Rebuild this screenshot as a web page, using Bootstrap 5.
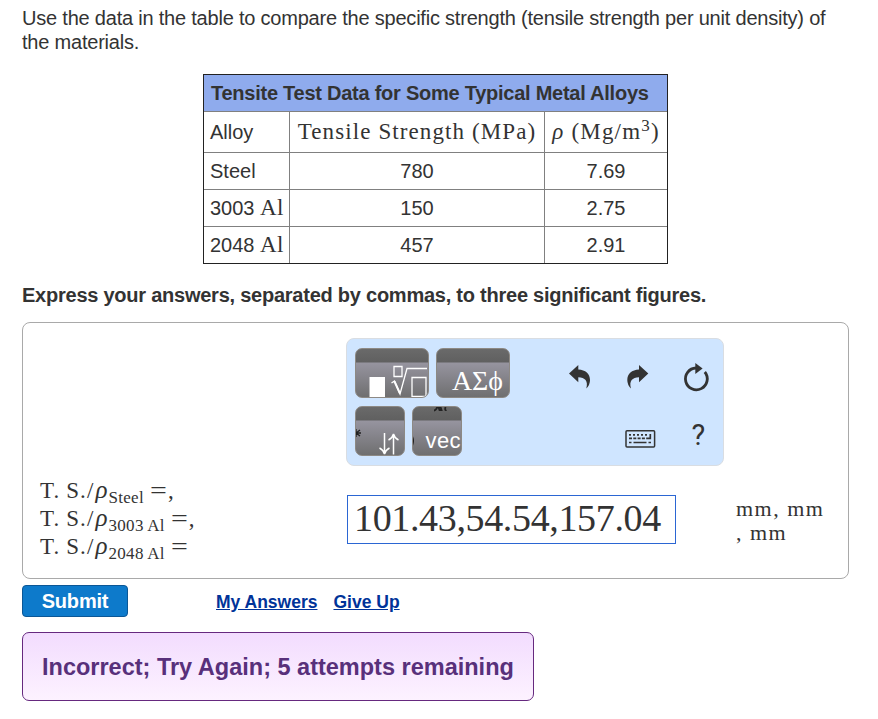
<!DOCTYPE html>
<html lang="en">
<head>
<meta charset="utf-8">
<meta name="viewport" content="width=device-width, initial-scale=1">
<title>Specific strength</title>
<link href="https://cdn.jsdelivr.net/npm/bootstrap@5.3.0/dist/css/bootstrap.min.css" rel="stylesheet">
<style>
body{font:20px/24px "Liberation Sans",Arial,sans-serif;color:#333;background:#fff;height:719px;overflow:hidden}
.page{padding:6px 29px 0 22px}
.intro{height:48px;white-space:nowrap;letter-spacing:-.21px}
.math{font-family:"Liberation Serif","Times New Roman",serif;font-size:23px;letter-spacing:1.1px}
.data-table{width:465px;margin:20px 0 0 181px;table-layout:fixed;border:1px solid #222;border-collapse:collapse;white-space:nowrap}
.data-table th,.data-table td{border:1px solid #808080;padding:0 6px;height:37px;line-height:24px;vertical-align:middle}
.data-table thead th{background:#8fabed;padding-left:7px;letter-spacing:-.25px}
.data-table .heads td{height:41px}
.data-table{outline:1px solid #222;outline-offset:-1px}
.data-table .alloy{letter-spacing:.4px}
.data-table .density{letter-spacing:1.2px;margin:0 -4px}
.density sup{font-size:17px;top:-.5em;line-height:0;letter-spacing:1.2px}
.instr{margin-top:19px;height:24px;letter-spacing:-.24px}
.answer{height:257px;margin-top:15px;border:1px solid #a9a9a9;border-radius:8px;padding:15px 0 0 16px}
.labels{width:307px;padding:139px 0 0 1px;line-height:28px;white-space:nowrap}
.labels div{word-spacing:-1px}
.labels i{margin-left:1px;font-size:25px;line-height:20px}
.labels sub{font-size:17px;letter-spacing:.3px;bottom:-.32em}
.labels .eq{display:inline-block;transform:scaleX(1.3);transform-origin:left;margin-right:4px;line-height:20px}
.entry{width:378px}
.tools{height:128px;background:#cfe5ff;border:1px solid #d9dde2;border-radius:8px;padding:9px 0 0 8px}
.pads{width:195px;flex-shrink:0}
.pad{height:50px;width:50px;border:1px solid #8d8984;border-radius:7px;overflow:hidden;margin-right:7px;background:linear-gradient(#6a6a6a 0,#606060 13px,#96949f 14px,#6f6f70 100%)}
.pad.wide{width:74px}
.pad svg,.acts svg{display:block}
.acts{display:grid;grid-template-columns:repeat(3,58px);grid-auto-rows:58px;color:#333}
.value{width:329px;height:49px;margin:29px 0 0 1px;border:1px solid #2b66d3;border-radius:0;padding:0 0 3px 6px;font-size:38px;line-height:44px;letter-spacing:-.35px;color:#333}
.units{padding:159px 0 0 12px;font-size:22px;letter-spacing:1.5px;white-space:nowrap}
.submit{width:106px;height:32px;border:1px solid #0b5796;border-radius:4px;background:#0d7acb;color:#fff;font-size:20px;font-weight:700;line-height:30px;padding:0;letter-spacing:-.2px}
.lnk{font-size:17.500px;font-weight:700;color:#039;text-decoration:underline;padding-top:2px}
.feedback{width:512px;height:69px;margin-top:15px;border:1px solid #66297f;border-radius:7px;background:linear-gradient(#f2dcfe,#fdf2ff);color:#58307b;font-size:23.500px;font-weight:700;padding-left:19px;white-space:nowrap}
</style>
<script src="https://cdn.jsdelivr.net/npm/bootstrap@5.3.0/dist/js/bootstrap.bundle.min.js"></script>
</head>
<body>
<main class="page">
<p class="intro mb-0">Use the data in the table to compare the specific strength (tensile strength per unit density) of<br>the materials.</p>
<table class="data-table">
<colgroup><col style="width:86px"><col style="width:255px"><col style="width:123px"></colgroup>
<thead><tr><th colspan="3">Tensite Test Data for Some Typical Metal Alloys</th></tr></thead>
<tbody>
<tr class="heads"><td>Alloy</td><td class="text-center"><span class="math">Tensile Strength (MPa)</span></td><td class="text-center"><span class="math density"><i>ρ</i> (Mg/m<sup>3</sup>)</span></td></tr>
<tr><td>Steel</td><td class="text-center">780</td><td class="text-center">7.69</td></tr>
<tr><td>3003 <span class="math alloy">Al</span></td><td class="text-center">150</td><td class="text-center">2.75</td></tr>
<tr><td>2048 <span class="math alloy">Al</span></td><td class="text-center">457</td><td class="text-center">2.91</td></tr>
</tbody>
</table>
<p class="instr fw-bold mb-0">Express your answers, separated by commas, to three significant figures.</p>
<section class="answer d-flex">
<div class="labels math">
<div>T. S./<i>ρ</i><sub>Steel</sub> <span class="eq">=</span>,</div>
<div>T. S./<i>ρ</i><sub>3003 Al</sub> <span class="eq">=</span>,</div>
<div>T. S./<i>ρ</i><sub>2048 Al</sub> <span class="eq">=</span></div>
</div>
<div class="entry">
<div class="tools d-flex">
<div class="pads d-flex flex-wrap align-content-start">
<button class="pad wide p-0" aria-label="Templates"><svg width="72" height="48" viewBox="0 0 72 48"><path d="M13.500 28h15.500v20h-15.500z" fill="#fff"/><g fill="none" stroke="#fff"><path d="M38 17.500h8v10h-8zM56 28.500h14v19H56z" stroke-width="1.300"/><path d="M35.500 34l3-2 5.500 13 7-25.500H71" stroke-width="1.300"/><path d="M38.500 32.500l5.500 12" stroke-width="2"/></g></svg></button>
<button class="pad wide p-0" aria-label="Symbols"><svg width="72" height="48"><text x="15" y="40.500" font-family="Liberation Serif,serif" font-size="26.500" fill="#fff" textLength="51" lengthAdjust="spacingAndGlyphs">ΑΣϕ</text></svg></button>
<button class="pad p-0 mt-2" aria-label="Arrows"><svg width="48" height="48"><path d="M0 22v8M-3 26h8M0 26l4-3M0 26l4 3" stroke="#222" stroke-width="1.300"/><g fill="none" stroke="#fff" stroke-width="1.500"><path d="M28.500 26v21M23.500 41q4 2 5 6q1-4 5-6M37.500 47.500V27M32.500 33q4-2 5-6q1 4 5 6"/></g></svg></button>
<button class="pad p-0 mt-2" aria-label="Vectors"><svg width="48" height="48"><path d="M-1 29q2.500 5 0 10" fill="none" stroke="#222" stroke-width="1.500"/><path d="M21 3.500q2 0 3.500-4M25.500 0h2l1 3h-2zM32.500 0q-1 4 1 3" fill="none" stroke="#222" stroke-width="1.800"/><text x="12.500" y="41" font-family="Liberation Sans,sans-serif" font-size="22" fill="#fff" textLength="35">vec</text></svg></button>
</div>
<div class="acts">
<svg width="58" height="58"><path id="turn" d="M19 25.400L28.300 17v4.500C35.500 21.800 40 26 40 32q0 5-3.700 8.500C38.500 33 35 29.500 28.300 29.300v5z" fill="#333"/></svg>
<svg width="58" height="58"><use href="#turn" transform="translate(59.300 0) scale(-1 1)"/></svg>
<svg width="58" height="58"><path d="M38.800 24A10.900 10.900 0 1 1 30 20" fill="none" stroke="#333" stroke-width="2.800"/><path d="M29.300 15l7.300 5.500-7.300 5.500z" fill="#333"/></svg>
<span></span>
<svg width="58" height="58"><rect x="18" y="24.700" width="28.600" height="16.300" rx="1" fill="none" stroke="#333" stroke-width="1.500"/><g fill="none" stroke="#333" stroke-width="1.700"><path d="M21 28.800h20" stroke-dasharray="2 2"/><path d="M21 32.300h18" stroke-dasharray="3 1.300"/><path d="M21 36.500h2.500M25.500 36.500h13M40.500 36.500h2.500M39 32.300h3.300V28"/></g></svg>
<svg width="58" height="58"><text x="25.500" y="39" font-family="Roboto,sans-serif" font-size="29" fill="#333">?</text></svg>
</div>
</div>
<input class="value math d-block" value="101.43,54.54,157.04" aria-label="Answer">
</div>
<div class="units math">mm, mm<br>, mm</div>
</section>
<div class="d-flex align-items-center" style="margin-top:6px">
<button class="submit">Submit</button>
<a href="#" class="lnk" style="margin-left:88px">My Answers</a>
<a href="#" class="lnk ms-3">Give Up</a>
</div>
<div class="feedback d-flex align-items-center">Incorrect; Try Again; 5 attempts remaining</div>
</main>
</body>
</html>
